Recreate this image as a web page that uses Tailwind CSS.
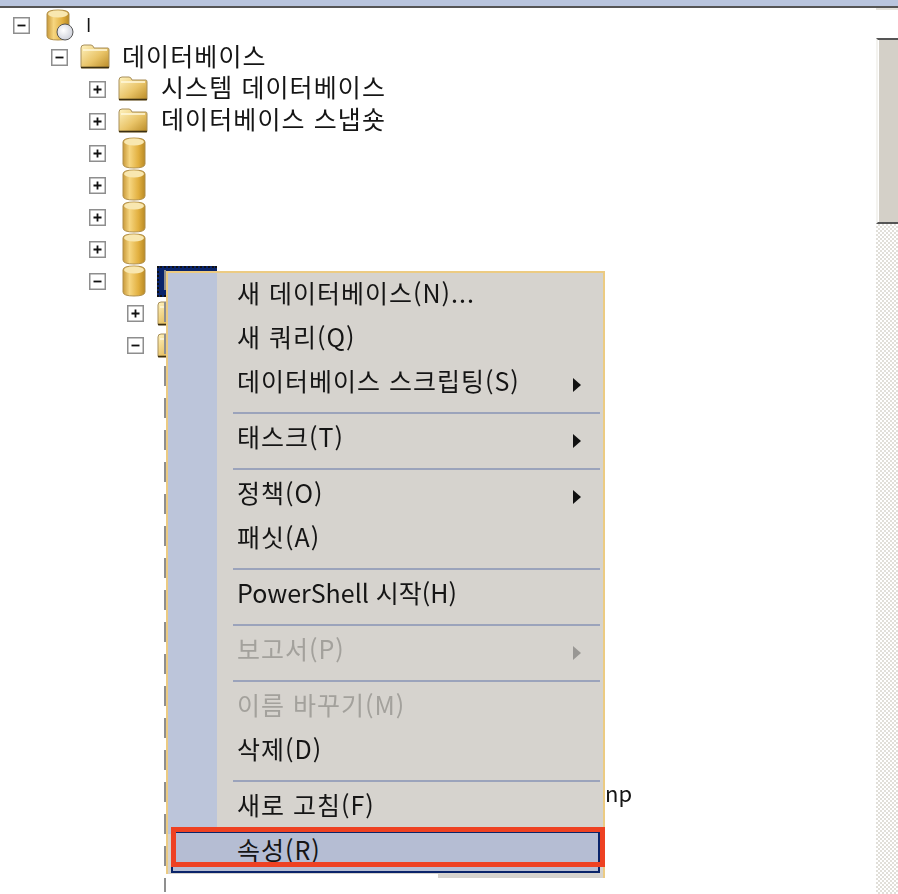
<!DOCTYPE html>
<html lang="ko">
<head>
<meta charset="utf-8">
<script src="https://cdn.jsdelivr.net/npm/@tailwindcss/browser@4"></script>
</head>
<body class="bg-white">
<svg width="0" height="0" class="absolute">
  <defs>
    <linearGradient id="fold" x1="0" y1="0" x2="1" y2="1"><stop offset="0" stop-color="#fff3c0"/><stop offset="0.55" stop-color="#e9c468"/><stop offset="1" stop-color="#b98a25"/></linearGradient>
    <linearGradient id="cyl" x1="0" y1="0" x2="1" y2="0"><stop offset="0" stop-color="#c9993a"/><stop offset="0.3" stop-color="#f6d680"/><stop offset="0.7" stop-color="#e2b040"/><stop offset="1" stop-color="#b98a25"/></linearGradient>
    <radialGradient id="disc" cx="0.4" cy="0.4" r="0.7"><stop offset="0" stop-color="#ffffff"/><stop offset="1" stop-color="#c9ccd6"/></radialGradient>
    <symbol id="folder" viewBox="0 0 30 26"><path d="M1 5 Q1 2 4 2 H11 Q13 2 14 5 H28 Q29 5 29 7 V24 Q29 25 28 25 H2 Q1 25 1 24 Z" fill="url(#fold)" stroke="#a88f5a" stroke-width="1"/><path d="M1 24.5 H29" stroke="#3b2f12" stroke-width="1.6"/><path d="M3 7 H27" stroke="#fff8dc" stroke-width="1.5"/></symbol>
    <symbol id="db" viewBox="0 0 24 32"><path d="M1 5 Q1 1 12 1 Q23 1 23 5 V27 Q23 31 12 31 Q1 31 1 27 Z" fill="url(#cyl)" stroke="#b08f4a" stroke-width="1"/><ellipse cx="12" cy="5" rx="10" ry="3.4" fill="#f8e7b0"/></symbol>
    <symbol id="server" viewBox="0 0 28 32"><path d="M1 5 Q1 1 12 1 Q23 1 23 5 V27 Q23 31 12 31 Q1 31 1 27 Z" fill="url(#cyl)" stroke="#b08f4a" stroke-width="1"/><ellipse cx="12" cy="5" rx="10" ry="3.4" fill="#f8e7b0"/><circle cx="19" cy="23" r="8" fill="url(#disc)" stroke="#555" stroke-width="1"/></symbol>
    <symbol id="plus" viewBox="0 0 17 17"><rect x="0.75" y="0.75" width="15.5" height="15.5" fill="#fff" stroke="#8e8e8e" stroke-width="1.5"/><path d="M4.5 8.5H12.5M8.5 4.5V12.5" stroke="#111" stroke-width="1.8"/></symbol>
    <symbol id="minus" viewBox="0 0 17 17"><rect x="0.75" y="0.75" width="15.5" height="15.5" fill="#fff" stroke="#8e8e8e" stroke-width="1.5"/><path d="M4.5 8.5H12.5" stroke="#111" stroke-width="1.8"/></symbol>
    <symbol id="arrow" viewBox="0 0 10 14"><path d="M1 0 L9 7 L1 14 Z" fill="#111"/></symbol>
  </defs>
</svg>

<div class="relative w-[898px] h-[894px] overflow-hidden bg-white text-[#151515] font-['Noto_Sans_CJK_KR','Liberation_Sans',sans-serif] text-[25px] leading-none">
  <div class="blur-[0.4px] w-full h-full">
  <div class="h-[6px] bg-[#b9c5de]"></div>
  <div class="h-[2px] bg-[#555555]"></div>

  <div class="flex h-[886px]">
    <div class="flex-1 pt-[1px] tracking-[1.1px]">
      <div class="flex items-center h-[32px] pl-[13px]"><svg class="w-[17px] h-[17px]"><use href="#minus"/></svg><svg class="w-[28px] h-[32px] ml-[16px]"><use href="#server"/></svg><span class="ml-[12px] text-[18px] pb-[2px]">I</span></div>
      <div class="flex items-center h-[32px] pl-[51px]"><svg class="w-[17px] h-[17px]"><use href="#minus"/></svg><svg class="w-[30px] h-[26px] ml-[12px] -translate-y-[1px]"><use href="#folder"/></svg><span class="ml-[12px] whitespace-nowrap pb-[4px]">데이터베이스</span></div>
      <div class="flex items-center h-[32px] pl-[89px]"><svg class="w-[17px] h-[17px]"><use href="#plus"/></svg><svg class="w-[30px] h-[26px] ml-[12px] -translate-y-[1px]"><use href="#folder"/></svg><span class="ml-[13px] whitespace-nowrap pb-[6px]">시스템 데이터베이스</span></div>
      <div class="flex items-center h-[32px] pl-[89px]"><svg class="w-[17px] h-[17px]"><use href="#plus"/></svg><svg class="w-[30px] h-[26px] ml-[12px] -translate-y-[1px]"><use href="#folder"/></svg><span class="ml-[13px] whitespace-nowrap pb-[6px]">데이터베이스 스냅숏</span></div>
      <div class="flex items-center h-[32px] pl-[89px]"><svg class="w-[17px] h-[17px]"><use href="#plus"/></svg><svg class="w-[24px] h-[32px] ml-[16px]"><use href="#db"/></svg></div>
      <div class="flex items-center h-[32px] pl-[89px]"><svg class="w-[17px] h-[17px]"><use href="#plus"/></svg><svg class="w-[24px] h-[32px] ml-[16px]"><use href="#db"/></svg></div>
      <div class="flex items-center h-[32px] pl-[89px]"><svg class="w-[17px] h-[17px]"><use href="#plus"/></svg><svg class="w-[24px] h-[32px] ml-[16px]"><use href="#db"/></svg></div>
      <div class="flex items-center h-[32px] pl-[89px]"><svg class="w-[17px] h-[17px]"><use href="#plus"/></svg><svg class="w-[24px] h-[32px] ml-[16px]"><use href="#db"/></svg></div>
      <div class="flex items-center h-[32px] pl-[89px]"><svg class="w-[17px] h-[17px]"><use href="#minus"/></svg><svg class="w-[24px] h-[32px] ml-[16px]"><use href="#db"/></svg><span class="ml-[11px] block w-[60px] h-[31px] bg-[#0a246a] border-2 border-dotted border-[#111]"></span></div>
      <div class="flex items-center h-[32px] pl-[127px]"><svg class="w-[17px] h-[17px]"><use href="#plus"/></svg><svg class="w-[30px] h-[26px] ml-[13px]"><use href="#folder"/></svg></div>
      <div class="flex items-center h-[32px] pl-[127px]"><svg class="w-[17px] h-[17px]"><use href="#minus"/></svg><svg class="w-[30px] h-[26px] ml-[13px]"><use href="#folder"/></svg></div>
    </div>

    <div class="w-[22px] flex flex-col">
      <div class="h-[2px] bg-[#e4e2dc]"></div>
      <div class="h-[28px] bg-white"></div>
      <div class="h-[186px] bg-[#d4d0c8] border-t-2 border-b-2 border-[#555555] border-l-2 border-l-[#f4f3ef] shadow-[inset_1px_0_0_#fff]"></div>
      <div class="flex-1 bg-[repeating-conic-gradient(#d4d0c8_0_25%,#ffffff_0_50%)] bg-[length:4px_4px] opacity-70"></div>
    </div>
  </div>

  <div class="absolute left-[164px] top-[270px] h-[622px] w-[2px] bg-[repeating-linear-gradient(to_bottom,#8f8f8f_0_20px,transparent_20px_32px)]"></div>
  <span class="absolute left-[605px] top-[781px] text-[22px]">np</span>

  <div class="absolute left-[166px] top-[271px] w-[439px] h-[607px] pt-[2px] bg-[#d6d3ce] border-2 border-b-0 border-[#eccb82] flex flex-col text-[25px] tracking-[1px]">
    <div class="absolute left-0 top-0 bottom-[44px] w-[49px] bg-[#bcc5da]"></div>
    <div class="relative flex items-center h-[44px] pl-[69px] pb-[10px]"><span>새 데이터베이스(N)...</span></div>
    <div class="relative flex items-center h-[44px] pl-[69px] pb-[10px]"><span>새 쿼리(Q)</span></div>
    <div class="relative flex items-center h-[44px] pl-[69px] pb-[10px]"><span>데이터베이스 스크립팅(S)</span><svg class="absolute left-[404px] top-[15px] w-[10px] h-[14px]"><use href="#arrow"/></svg></div>
    <div class="relative h-[12px] pl-[65px] pr-[3px] flex items-center"><div class="h-[2px] w-full bg-[#9ba3bb]"></div></div>
    <div class="relative flex items-center h-[44px] pl-[69px] pb-[10px]"><span>태스크(T)</span><svg class="absolute left-[404px] top-[15px] w-[10px] h-[14px]"><use href="#arrow"/></svg></div>
    <div class="relative h-[12px] pl-[65px] pr-[3px] flex items-center"><div class="h-[2px] w-full bg-[#9ba3bb]"></div></div>
    <div class="relative flex items-center h-[44px] pl-[69px] pb-[10px]"><span>정책(O)</span><svg class="absolute left-[404px] top-[15px] w-[10px] h-[14px]"><use href="#arrow"/></svg></div>
    <div class="relative flex items-center h-[44px] pl-[69px] pb-[10px]"><span>패싯(A)</span></div>
    <div class="relative h-[12px] pl-[65px] pr-[3px] flex items-center"><div class="h-[2px] w-full bg-[#9ba3bb]"></div></div>
    <div class="relative flex items-center h-[44px] pl-[69px] pb-[10px]"><span class="tracking-normal">PowerShell 시작(H)</span></div>
    <div class="relative h-[12px] pl-[65px] pr-[3px] flex items-center"><div class="h-[2px] w-full bg-[#9ba3bb]"></div></div>
    <div class="relative flex items-center h-[44px] pl-[69px] pb-[10px] text-[#a3a19c]"><span>보고서(P)</span><svg class="absolute left-[404px] top-[15px] w-[10px] h-[14px] opacity-30"><use href="#arrow"/></svg></div>
    <div class="relative h-[12px] pl-[65px] pr-[3px] flex items-center"><div class="h-[2px] w-full bg-[#9ba3bb]"></div></div>
    <div class="relative flex items-center h-[44px] pl-[69px] pb-[10px] text-[#a3a19c]"><span>이름 바꾸기(M)</span></div>
    <div class="relative flex items-center h-[44px] pl-[69px] pb-[10px]"><span>삭제(D)</span></div>
    <div class="relative h-[12px] pl-[65px] pr-[3px] flex items-center"><div class="h-[2px] w-full bg-[#9ba3bb]"></div></div>
    <div class="relative flex items-center h-[44px] pl-[69px] pb-[10px]"><span>새로 고침(F)</span></div>
    <div class="relative flex items-center h-[42px] pl-[71px] pb-[6px] -mx-[2px]"><div class="absolute inset-x-[5px] inset-y-0 bg-[#b5bdd3] border-2 border-[#0a246a]"></div><span class="relative">속성(R)</span></div>
    <div class="absolute left-[-2px] bottom-0 w-[272px] h-[4px] bg-white"></div>
  </div>
  </div>
  <div class="absolute left-[171px] top-[827px] w-[434px] h-[40px] border-[5px] border-[#ee4122]"></div>
</div>
</body>
</html>
